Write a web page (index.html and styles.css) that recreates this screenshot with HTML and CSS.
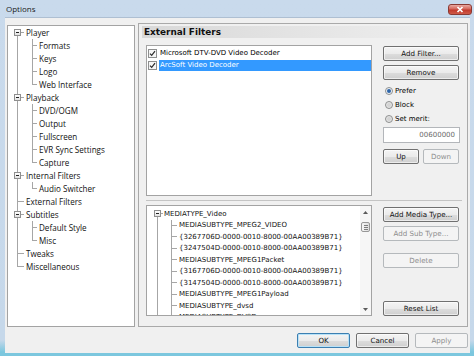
FILE: index.html
```html
<!DOCTYPE html>
<html>
<head>
<meta charset="utf-8">
<title>Options</title>
<link rel="stylesheet" href="styles.css">
</head>
<body>
<div class="win">
  <div class="titlebar">
    <span class="title">Options</span>
    <span class="close"><svg width="10" height="7" viewBox="0 0 10 7"><path d="M2.5 1 L7.5 6 M7.5 1 L2.5 6" stroke="#fff" stroke-width="1.7"/></svg></span>
  </div>
  <div class="content">
    <div class="main">
      <div class="tree">
        <div class="tr"><span class="g g1 f"><span class="bx"></span></span><span class="tx">Player</span></div>
        <div class="tr"><span class="g g1 v"></span><span class="g g2 t"></span><span class="tx">Formats</span></div>
        <div class="tr"><span class="g g1 v"></span><span class="g g2 t"></span><span class="tx">Keys</span></div>
        <div class="tr"><span class="g g1 v"></span><span class="g g2 t"></span><span class="tx">Logo</span></div>
        <div class="tr"><span class="g g1 v"></span><span class="g g2 l"></span><span class="tx">Web Interface</span></div>
        <div class="tr"><span class="g g1 t"><span class="bx"></span></span><span class="tx">Playback</span></div>
        <div class="tr"><span class="g g1 v"></span><span class="g g2 t"></span><span class="tx">DVD/OGM</span></div>
        <div class="tr"><span class="g g1 v"></span><span class="g g2 t"></span><span class="tx">Output</span></div>
        <div class="tr"><span class="g g1 v"></span><span class="g g2 t"></span><span class="tx">Fullscreen</span></div>
        <div class="tr"><span class="g g1 v"></span><span class="g g2 t"></span><span class="tx">EVR Sync Settings</span></div>
        <div class="tr"><span class="g g1 v"></span><span class="g g2 l"></span><span class="tx">Capture</span></div>
        <div class="tr"><span class="g g1 t"><span class="bx"></span></span><span class="tx">Internal Filters</span></div>
        <div class="tr"><span class="g g1 v"></span><span class="g g2 l"></span><span class="tx">Audio Switcher</span></div>
        <div class="tr"><span class="g g1 t"></span><span class="tx">External Filters</span></div>
        <div class="tr"><span class="g g1 t"><span class="bx"></span></span><span class="tx">Subtitles</span></div>
        <div class="tr"><span class="g g1 v"></span><span class="g g2 t"></span><span class="tx">Default Style</span></div>
        <div class="tr"><span class="g g1 v"></span><span class="g g2 l"></span><span class="tx">Misc</span></div>
        <div class="tr"><span class="g g1 t"></span><span class="tx">Tweaks</span></div>
        <div class="tr"><span class="g g1 l"></span><span class="tx">Miscellaneous</span></div>
      </div>

      <div class="panel">
        <div class="hdr">External Filters</div>
        <div class="upper">
          <div class="list">
            <div class="li">
              <svg class="cb" width="9" height="9" viewBox="0 0 9 9"><rect x=".5" y=".5" width="8" height="8" fill="#f6f6f6" stroke="#8e8f8f"/><path d="M2 4.6 L3.7 6.4 L7 2.2" fill="none" stroke="#2b2b2b" stroke-width="1.2"/></svg>
              <span class="lt">Microsoft DTV-DVD Video Decoder</span>
            </div>
            <div class="li sel">
              <svg class="cb" width="9" height="9" viewBox="0 0 9 9"><rect x=".5" y=".5" width="8" height="8" fill="#f6f6f6" stroke="#8e8f8f"/><path d="M2 4.6 L3.7 6.4 L7 2.2" fill="none" stroke="#2b2b2b" stroke-width="1.2"/></svg>
              <span class="lt">ArcSoft Video Decoder</span>
            </div>
          </div>
          <div class="col">
            <div class="btn b1">Add Filter...</div>
            <div class="btn b2">Remove</div>
            <div class="radios">
              <div class="rd"><svg width="8" height="8" viewBox="0 0 8 8"><circle cx="4" cy="4" r="3.5" fill="#eef2f6" stroke="#8e8f8f"/><circle cx="4" cy="4" r="2" fill="#2c64a8"/></svg><span>Prefer</span></div>
              <div class="rd"><svg width="8" height="8" viewBox="0 0 8 8"><circle cx="4" cy="4" r="3.5" fill="#e6e6e6" stroke="#8e8f8f"/><circle cx="4" cy="4" r="2" fill="#d4d4d4"/></svg><span>Block</span></div>
              <div class="rd"><svg width="8" height="8" viewBox="0 0 8 8"><circle cx="4" cy="4" r="3.5" fill="#e6e6e6" stroke="#8e8f8f"/><circle cx="4" cy="4" r="2" fill="#d4d4d4"/></svg><span>Set merit:</span></div>
            </div>
            <div class="edit">00600000</div>
            <div class="updown">
              <div class="btn">Up</div>
              <div class="btn dis">Down</div>
            </div>
          </div>
        </div>
        <div class="split"></div>
        <div class="lower">
          <div class="mtree">
            <div class="mrows">
              <div class="mr"><span class="g h1 f"><span class="bx"></span></span><span class="tx">MEDIATYPE_Video</span></div>
              <div class="mr"><span class="g h1 v"></span><span class="g h2 t"></span><span class="tx">MEDIASUBTYPE_MPEG2_VIDEO</span></div>
              <div class="mr"><span class="g h1 v"></span><span class="g h2 t"></span><span class="tx">{3267706D-0000-0010-8000-00AA00389B71}</span></div>
              <div class="mr"><span class="g h1 v"></span><span class="g h2 t"></span><span class="tx">{3247504D-0000-0010-8000-00AA00389B71}</span></div>
              <div class="mr"><span class="g h1 v"></span><span class="g h2 t"></span><span class="tx">MEDIASUBTYPE_MPEG1Packet</span></div>
              <div class="mr"><span class="g h1 v"></span><span class="g h2 t"></span><span class="tx">{3167706D-0000-0010-8000-00AA00389B71}</span></div>
              <div class="mr"><span class="g h1 v"></span><span class="g h2 t"></span><span class="tx">{3147504D-0000-0010-8000-00AA00389B71}</span></div>
              <div class="mr"><span class="g h1 v"></span><span class="g h2 t"></span><span class="tx">MEDIASUBTYPE_MPEG1Payload</span></div>
              <div class="mr"><span class="g h1 v"></span><span class="g h2 t"></span><span class="tx">MEDIASUBTYPE_dvsd</span></div>
              <div class="mr"><span class="g h1 v"></span><span class="g h2 t"></span><span class="tx">MEDIASUBTYPE_DVSD</span></div>
            </div>
            <div class="sb">
              <div class="arr"><svg width="5" height="3" viewBox="0 0 5 3"><path d="M0 3 L2.5 0 L5 3Z" fill="#5a5a5a"/></svg></div>
              <div class="thumb"><span></span><span></span><span></span></div>
              <div class="sp"></div>
              <div class="arr"><svg width="5" height="3" viewBox="0 0 5 3"><path d="M0 0 L5 0 L2.5 3Z" fill="#5a5a5a"/></svg></div>
            </div>
          </div>
          <div class="col">
            <div class="btn b3">Add Media Type...</div>
            <div class="btn dis b4">Add Sub Type...</div>
            <div class="btn dis b5">Delete</div>
            <div class="btn b6">Reset List</div>
          </div>
        </div>
      </div>
    </div>
    <div class="footer">
      <div class="btn fb ok">OK</div>
      <div class="btn fb">Cancel</div>
      <div class="btn fb dis">Apply</div>
    </div>
  </div>
</div>
</body>
</html>
```

FILE: styles.css
```css
* { box-sizing: border-box; margin: 0; padding: 0; }
html, body { width: 474px; height: 356px; overflow: hidden; }
body {
  background: linear-gradient(#c9daec 0, #c6d8ea 340px, #7cc7de 352px, #7cc7de 100%);
  font-family: "DejaVu Sans", sans-serif;
  font-size: 7px;
  color: #000;
}
.win { display: flex; flex-direction: column; height: 356px; }

.titlebar {
  height: 17px;
  display: flex;
  justify-content: space-between;
  align-items: flex-start;
  padding: 0 2px 0 6px;
}
.title { font-family: "Open Sans", sans-serif; font-size: 8px; line-height: 18px; color: #1b1b1b; }
.close {
  margin-top: 4px;
  width: 24px;
  height: 11px;
  border-radius: 3px;
  border: 1px solid #8a3a33;
  background: linear-gradient(#e8aaa2, #d5665a 45%, #c2392c 55%, #cf5a48);
  display: flex;
  align-items: center;
  justify-content: center;
}

.content {
  flex: 1;
  margin: 0 4px 3px 5px;
  background: #f0f0f0;
  border-top: 1px solid #aebfd2;
  display: flex;
  flex-direction: column;
  padding: 5px 2px 0 2px;
}
.main { display: flex; gap: 3px; height: 304px; }

/* left tree */
.tree {
  width: 128px;
  margin-top: 2px;
  background: #fff;
  border: 1px solid #a3a3a3;
  font-family: "Open Sans", sans-serif;
  font-size: 8.1px;
  color: #111;
}
.tr { display: flex; height: 13px; align-items: center; white-space: nowrap; }
.tx { margin-left: 1px; }

.g { flex: none; height: 100%; display: flex; align-items: center; background-repeat: no-repeat; }
.g1 { width: 17px; --x: 9px; --hy: 6px; --hw: 7px; }
.g2 { width: 13px; --x: 7px; --hy: 6px; --hw: 5px; }
.h1 { width: 16px; --x: 10px; --hy: 5px; --hw: 6px; }
.h2 { width: 15px; --x: 8px; --hy: 5px; --hw: 6px; }

.v {
  background-image: linear-gradient(#a6a6a6, #a6a6a6);
  background-position: var(--x) 0;
  background-size: 1px 100%;
}
.t {
  background-image: linear-gradient(#a6a6a6, #a6a6a6), linear-gradient(#a6a6a6, #a6a6a6);
  background-position: var(--x) 0, var(--x) var(--hy);
  background-size: 1px 100%, var(--hw) 1px;
}
.l {
  background-image: linear-gradient(#a6a6a6, #a6a6a6), linear-gradient(#a6a6a6, #a6a6a6);
  background-position: var(--x) 0, var(--x) var(--hy);
  background-size: 1px calc(var(--hy) + 1px), var(--hw) 1px;
}
.f {
  background-image: linear-gradient(#a6a6a6, #a6a6a6), linear-gradient(#a6a6a6, #a6a6a6);
  background-position: var(--x) var(--hy), var(--x) var(--hy);
  background-size: 1px 100%, var(--hw) 1px;
}
.bx {
  width: 7px;
  height: 7px;
  margin-left: calc(var(--x) - 3px);
  border: 1px solid #8f8f8f;
  background: linear-gradient(#ffffff, #e2e2e2);
  display: flex;
  align-items: center;
  justify-content: center;
}
.bx::after { content: ""; width: 3px; height: 1px; background: #222; }

/* right panel */
.panel {
  width: 330px;
  border: 1px solid #a9a9a9;
  padding: 2px 4px 10px 3px;
  display: flex;
  flex-direction: column;
}
.hdr {
  height: 12px;
  font-weight: bold;
  font-size: 8.9px;
  line-height: 12px;
  padding-left: 2px;
  color: #111;
  background: linear-gradient(to right, #d8d8d8, #e9e9e9 70%, #efefef);
}
.upper { display: flex; margin-top: 7px; height: 151px; padding-left: 4px; }
.list {
  width: 226px;
  height: 151px;
  background: #fff;
  border: 1px solid #a3a3a3;
  padding-top: 1px;
}
.li { height: 12px; display: flex; align-items: center; padding-left: 1px; white-space: nowrap; }
.cb { flex: none; margin-right: 2px; }
.lt { height: 11px; line-height: 11px; padding-left: 1px; }
.sel .lt { flex: 1; background: #3399ff; color: #fff; }

.col { margin-left: 11px; width: 76px; display: flex; flex-direction: column; }
.btn {
  height: 15px;
  flex: none;
  border: 1px solid #707070;
  border-radius: 2px;
  background: linear-gradient(#f4f4f4 0, #ebebeb 50%, #dddddd 51%, #cfcfcf 100%);
  box-shadow: inset 0 0 0 1px rgba(255,255,255,.6);
  display: flex;
  align-items: center;
  justify-content: center;
  font-size: 7.1px;
  color: #111;
  white-space: nowrap;
}
.dis {
  border-color: #b5b9bc;
  background: #f4f4f4;
  box-shadow: none;
  color: #8d8d8d;
}
.b1 { margin-top: 1px; }
.b2 { margin-top: 4px; }
.radios { margin-top: 4px; display: flex; flex-direction: column; }
.rd { height: 14px; display: flex; align-items: center; padding-left: 2px; gap: 2px; }
.edit {
  margin-top: 1px;
  width: 77px;
  height: 16px;
  border: 1px solid #b3b6ba;
  background: #fff;
  text-align: right;
  padding-right: 4px;
  line-height: 14px;
  color: #6a6a6a;
}
.updown { margin-top: 6px; display: flex; gap: 4px; }
.updown .btn { flex: 1; }

.split {
  height: 9px;
  background: linear-gradient(#c4c4c4, #c4c4c4) no-repeat 4px 4px / 316px 1px;
}
.lower { display: flex; height: 111px; padding-left: 4px; }
.mtree {
  width: 226px;
  height: 111px;
  background: #fff;
  border: 1px solid #a3a3a3;
  display: flex;
  overflow: hidden;
}
.mrows { flex: 1; padding-top: 2px; overflow: hidden; }
.mr { display: flex; height: 11.5px; align-items: center; white-space: nowrap; color: #111; }
.h1 .bx { margin-left: 7px; }

.sb {
  width: 11px;
  flex: none;
  display: flex;
  flex-direction: column;
  align-items: center;
  background: #f6f6f6;
}
.arr { height: 12px; display: flex; align-items: center; justify-content: center; }
.thumb {
  width: 9px;
  height: 10px;
  margin-top: 4px;
  border: 1px solid #979797;
  border-radius: 2px;
  background: linear-gradient(to right, #f6f6f6, #dedede);
  display: flex;
  flex-direction: column;
  align-items: center;
  justify-content: center;
  gap: 1px;
}
.thumb span { width: 4px; height: 1px; background: #7c7c7c; }
.sp { flex: 1; }

.b3 { margin-top: 2px; }
.b4 { margin-top: 4px; }
.b5 { margin-top: 12px; }
.b6 { margin-top: auto; }

.footer { display: flex; justify-content: flex-end; gap: 6px; margin-top: 6px; }
.fb { width: 53px; }
.ok { border-color: #3c7fb1; box-shadow: inset 0 0 0 1px #b8e2f8; }
```
